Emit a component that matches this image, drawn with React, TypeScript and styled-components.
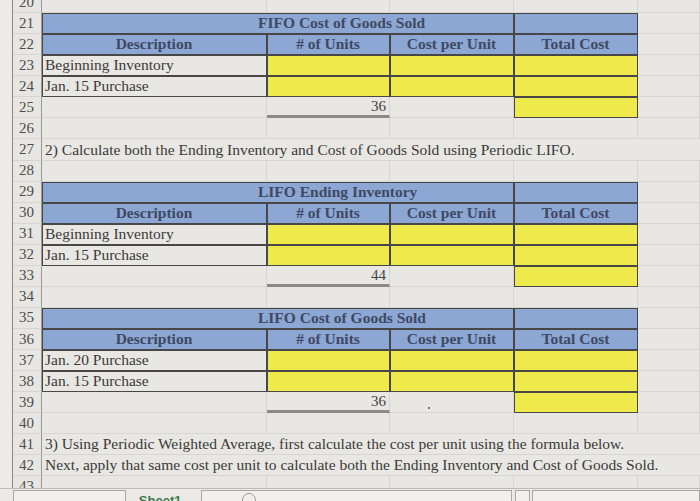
import React from 'react'
import styled, { createGlobalStyle, css } from 'styled-components'

type RowKind = 'blank' | 'title' | 'head' | 'item' | 'total' | 'note'

interface RowDef {
  n: number
  kind: RowKind
  text?: string
  dot?: boolean
}

const GRID = '#d7d5d0'
const DARK = '#474747'
const BLUE = '#8ca7d3'
const YELLOW = '#eeea4c'

const GlobalStyle = createGlobalStyle`
  html, body {
    margin: 0;
    padding: 0;
    background: #e9e7e3;
    overflow: hidden;
  }
`

const Page = styled.div`
  width: 700px;
  height: 501px;
  display: flex;
  flex-direction: column;
  overflow: hidden;
  font-family: "Liberation Serif", "Times New Roman", serif;
  color: #3a3a3a;
`

const Sheet = styled.div`
  height: 488px;
  overflow: hidden;
  flex-shrink: 0;
`

const Rows = styled.div`
  margin-top: -8px;
`

const Row = styled.div`
  display: grid;
  grid-template-columns: 13px 29px 225px 123px 124px 124px 1fr;
  height: 21.07px;
`

const Edge = styled.div`
  background: #ecebe8;
  border-right: 1px solid #8a8985;
`

const RowNum = styled.div`
  box-sizing: border-box;
  border-right: 1px solid #9a9894;
  border-bottom: 1px solid ${GRID};
  background: #e8e6e2;
  font-size: 15px;
  color: #4d4d4d;
  padding-left: 6px;
  display: flex;
  align-items: center;
`

const Cell = styled.div<{ $fill?: 'blue' | 'yellow'; $boxed?: boolean; $span?: number; $align?: 'left' | 'center' | 'right' }>`
  box-sizing: border-box;
  min-width: 0;
  border-right: 1px solid ${GRID};
  border-bottom: 1px solid ${GRID};
  display: flex;
  align-items: flex-end;
  padding: 0 3px 1px 3px;
  font-size: 15.5px;
  line-height: 18px;
  white-space: nowrap;
  overflow: visible;
  justify-content: ${({ $align }) => ($align === 'center' ? 'center' : $align === 'right' ? 'flex-end' : 'flex-start')};
  ${({ $span }) => ($span ? css`grid-column: span ${$span};` : '')}
  ${({ $fill }) => ($fill === 'blue' ? css`background: ${BLUE};` : $fill === 'yellow' ? css`background: ${YELLOW};` : '')}
  ${({ $boxed }) =>
    $boxed
      ? css`
          border-right-color: ${DARK};
          border-bottom-color: ${DARK};
          box-shadow: inset 1px 1px 0 ${DARK};
        `
      : ''}
`

const HeadText = styled.span`
  font-weight: bold;
  color: #3f4963;
`

const TitleCell = styled(Cell)`
  padding-left: 216px;
  justify-content: flex-start;
`

const TotalCell = styled(Cell)`
  border-bottom: 3px solid #8b8a87;
  padding-bottom: 0;
  font-size: 15px;
  color: #444;
`

const NoteCell = styled(Cell)`
  grid-column: span 5;
  border-right: none;
`

const Dot = styled.span`
  display: block;
  width: 2px;
  height: 2px;
  border-radius: 50%;
  background: #555;
  margin: 0 0 2px 35px;
`

const TabBar = styled.div`
  flex: 1;
  display: flex;
  align-items: flex-end;
  background: #eceae7;
  border-top: 1px solid #bdbbb7;
  font-family: "Liberation Sans", Arial, sans-serif;
`

const Tab = styled.div<{ $w: number; $ml?: number }>`
  box-sizing: border-box;
  width: ${({ $w }) => $w}px;
  margin-left: ${({ $ml }) => $ml ?? 0}px;
  height: 11px;
  border: 1px solid #a9a7a3;
  border-bottom: none;
  background: #f1f0ed;
  position: relative;
`

const SheetName = styled.div`
  margin-left: 13px;
  width: 62px;
  height: 8px;
  overflow: hidden;
  font-size: 13px;
  font-weight: bold;
  color: #3c7a4c;
  line-height: 15px;
`

const PlusCircle = styled.span`
  position: absolute;
  left: 40px;
  top: 2px;
  width: 12px;
  height: 12px;
  border: 1px solid #9c9a96;
  border-radius: 50%;
`

const rows: RowDef[] = [
  { n: 20, kind: 'blank' },
  { n: 21, kind: 'title', text: 'FIFO Cost of Goods Sold' },
  { n: 22, kind: 'head' },
  { n: 23, kind: 'item', text: 'Beginning Inventory' },
  { n: 24, kind: 'item', text: 'Jan. 15 Purchase' },
  { n: 25, kind: 'total', text: '36' },
  { n: 26, kind: 'blank' },
  { n: 27, kind: 'note', text: '2) Calculate both the Ending Inventory and Cost of Goods Sold using Periodic LIFO.' },
  { n: 28, kind: 'blank' },
  { n: 29, kind: 'title', text: 'LIFO Ending Inventory' },
  { n: 30, kind: 'head' },
  { n: 31, kind: 'item', text: 'Beginning Inventory' },
  { n: 32, kind: 'item', text: 'Jan. 15 Purchase' },
  { n: 33, kind: 'total', text: '44' },
  { n: 34, kind: 'blank' },
  { n: 35, kind: 'title', text: 'LIFO Cost of Goods Sold' },
  { n: 36, kind: 'head' },
  { n: 37, kind: 'item', text: 'Jan. 20 Purchase' },
  { n: 38, kind: 'item', text: 'Jan. 15 Purchase' },
  { n: 39, kind: 'total', text: '36', dot: true },
  { n: 40, kind: 'blank' },
  { n: 41, kind: 'note', text: '3) Using Periodic Weighted Average, first calculate the cost per unit using the formula below.' },
  { n: 42, kind: 'note', text: 'Next, apply that same cost per unit to calculate both the Ending Inventory and Cost of Goods Sold.' },
  { n: 43, kind: 'blank' }
]

function RowCells ({ row }: { row: RowDef }): React.ReactElement {
  switch (row.kind) {
    case 'title':
      return (
        <>
          <TitleCell $span={3} $fill='blue' $boxed><HeadText>{row.text}</HeadText></TitleCell>
          <Cell $fill='blue' $boxed />
          <Cell />
        </>
      )
    case 'head':
      return (
        <>
          <Cell $fill='blue' $boxed $align='center'><HeadText>Description</HeadText></Cell>
          <Cell $fill='blue' $boxed $align='center'><HeadText># of Units</HeadText></Cell>
          <Cell $fill='blue' $boxed $align='center'><HeadText>Cost per Unit</HeadText></Cell>
          <Cell $fill='blue' $boxed $align='center'><HeadText>Total Cost</HeadText></Cell>
          <Cell />
        </>
      )
    case 'item':
      return (
        <>
          <Cell $boxed>{row.text}</Cell>
          <Cell $fill='yellow' $boxed />
          <Cell $fill='yellow' $boxed />
          <Cell $fill='yellow' $boxed />
          <Cell />
        </>
      )
    case 'total':
      return (
        <>
          <Cell />
          <TotalCell $align='right'>{row.text}</TotalCell>
          <Cell>{row.dot === true ? <Dot /> : null}</Cell>
          <Cell $fill='yellow' $boxed />
          <Cell />
        </>
      )
    case 'note':
      return <NoteCell>{row.text}</NoteCell>
    default:
      return (
        <>
          <Cell />
          <Cell />
          <Cell />
          <Cell />
          <Cell />
        </>
      )
  }
}

export default function App (): React.ReactElement {
  return (
    <Page>
      <GlobalStyle />
      <Sheet>
        <Rows>
          {rows.map((row) => (
            <Row key={row.n}>
              <Edge />
              <RowNum>{row.n}</RowNum>
              <RowCells row={row} />
            </Row>
          ))}
        </Rows>
      </Sheet>
      <TabBar>
        <Tab $w={113} $ml={13} />
        <SheetName>Sheet1</SheetName>
        <Tab $w={312}><PlusCircle /></Tab>
        <Tab $w={15} $ml={3} />
        <Tab $w={168} $ml={2} />
      </TabBar>
    </Page>
  )
}
